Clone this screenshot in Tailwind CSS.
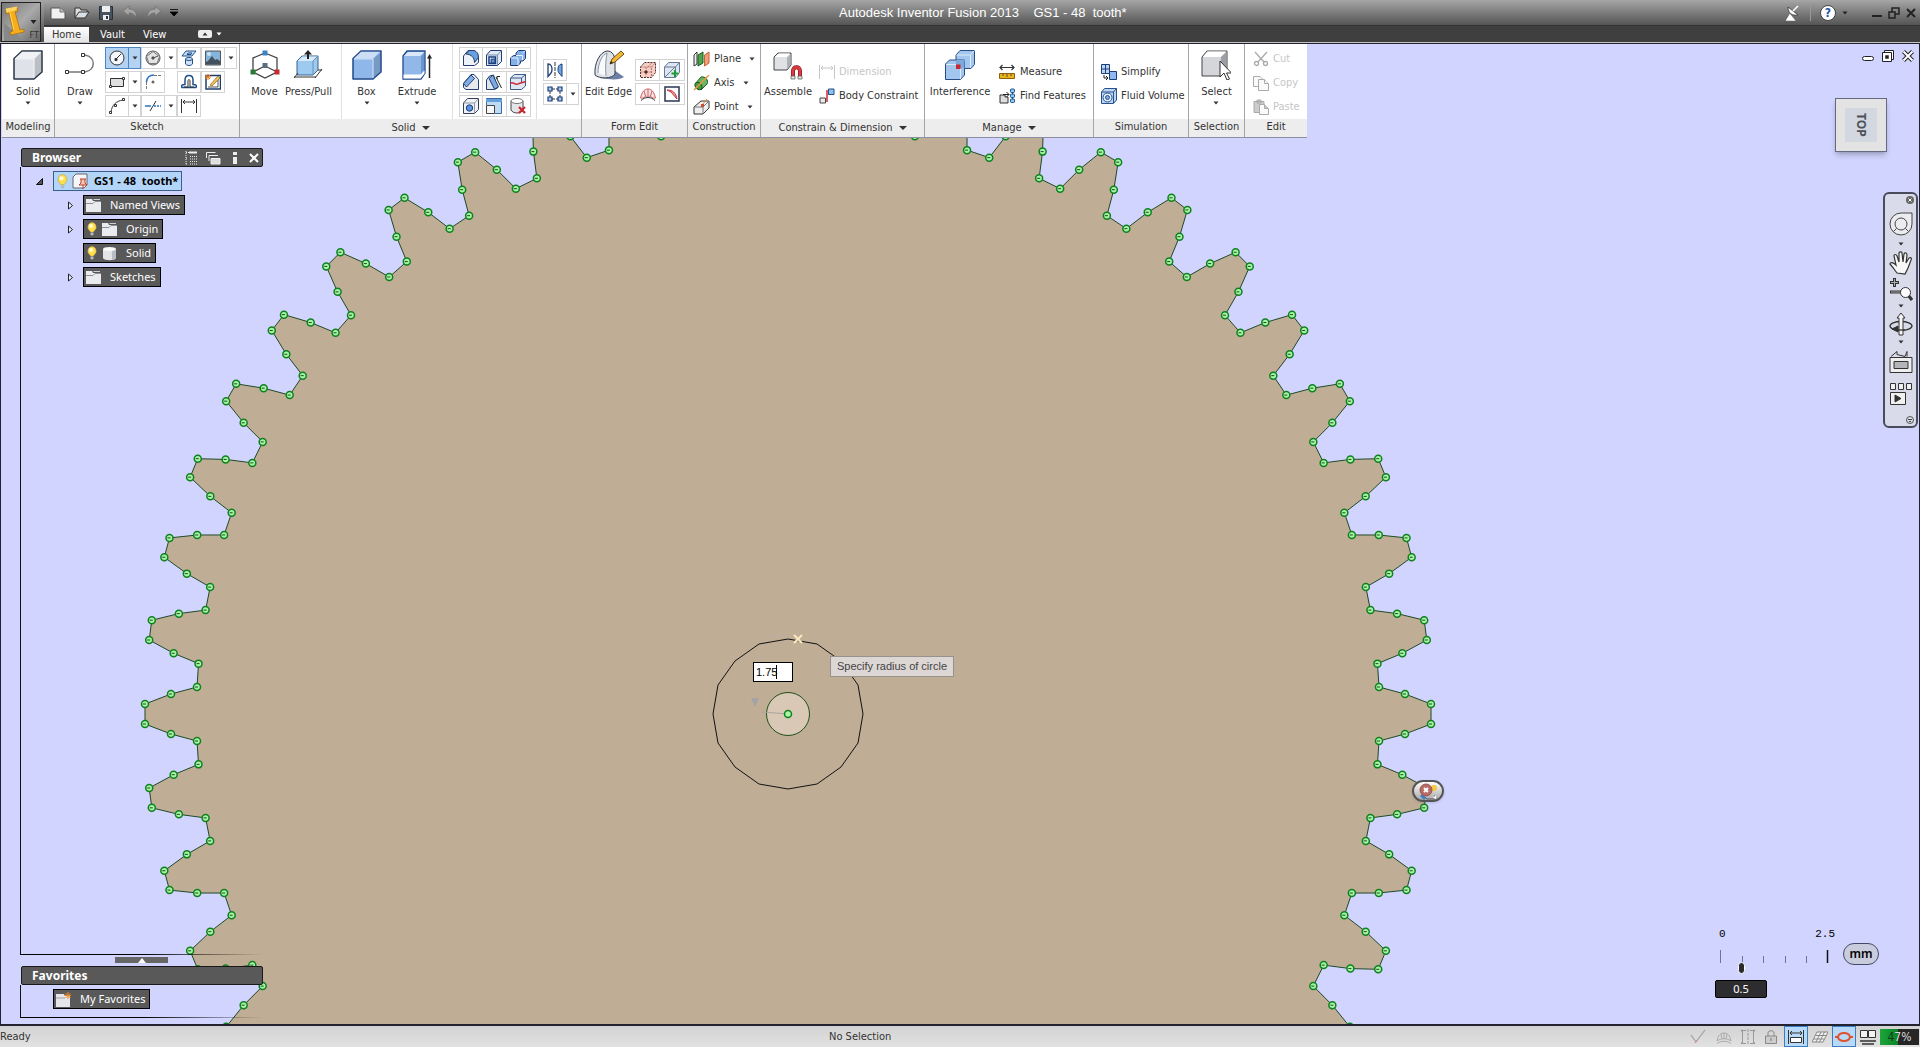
<!DOCTYPE html>
<html lang="en">
<head>
  <meta charset="UTF-8">
  <meta name="viewport" content="width=device-width, initial-scale=1.0">
  <title>Autodesk Inventor Fusion 2013</title>
  <script src="https://cdn.jsdelivr.net/npm/@tailwindcss/browser@4"></script>
</head>
<body class="h-screen flex flex-col overflow-hidden bg-[#3f3f3f] font-['DejaVu_Sans_Condensed','Noto_Sans',sans-serif] text-[11px] leading-4 text-[#333]">

  <!-- Shared symbols -->
  <svg class="hidden">
    <symbol id="caret" viewBox="0 0 6 4"><path d="M0.5 0.5h5L3 3.5z" fill="currentColor"/></symbol>
    <symbol id="cube" viewBox="0 0 30 30">
      <path d="M1 8.500L9 1H29V22L21 29H1z" stroke-width="1.500" stroke-linejoin="round"/>
      <path d="M1.800 8.500L9 1.800H28L21 8.500z" fill="#fff" fill-opacity=".55" stroke="none"/>
      <path d="M21.500 9L28.300 2.500V21.500L21.500 28z" fill="#000" fill-opacity=".16" stroke="none"/>
      <path d="M2 9H21V28" fill="none" stroke="#fff" stroke-opacity=".6" stroke-width="1"/>
    </symbol>
    <symbol id="folder" viewBox="0 0 15 15">
      <path d="M0 5V1h6l1 2h8v11H0z" fill="#e9ebee"/><path d="M7 1h7v1H8z" fill="#cfd1d5"/><path d="M0 5.500h7l2-2h6" fill="none" stroke="#8d9096"/>
    </symbol>
    <symbol id="bulb" viewBox="0 0 10 14">
      <path d="M5 0.500a4.500 4.500 0 0 0-2.500 8L3.500 10h3l1-1.500A4.500 4.500 0 0 0 5 .5z" fill="#ffe04c" stroke="#b8963a" stroke-width=".5"/><circle cx="4" cy="4" r="2" fill="#fffbd8"/><path d="M3.500 10.500h3v2l-1 1h-1l-1-1z" fill="#b4b8be"/>
    </symbol>
  </svg>

  <!-- Title bar and tabs -->
  <header class="flex h-[43px] shrink-0 border-b border-[#c4c4c4] text-white bg-[#3f3f3f]">
    <div class="w-11 shrink-0 bg-linear-to-b from-[#a6a6a6] to-[#4a4a4a]">
      <button class="relative block w-10 h-10 ml-px mt-[2px] border border-[#222] bg-linear-to-br from-[#777] via-[#aaa] to-[#666]" aria-label="Application menu">
        <svg class="w-[38px] h-[38px]" viewBox="0 0 38 38">
          <path d="M2 20L16 32 22 38H2z" fill="#888"/>
          <path d="M4 6L15 4 16 8 13 9 18 27 22 26 22 29 9 32 8 29 11 28 7 10 4 11z" fill="#f6ae1d" stroke="#a76a05" stroke-width=".7"/>
          <path d="M4 6L15 4 13 7 5 9zM8 10l4 17" fill="#ffd665" stroke="#ffd665"/>
          <path d="M28.500 17h6l-3 4z" fill="#222"/>
        </svg>
        <span class="absolute right-px bottom-0 text-[9px] leading-3 text-[#333]">FT</span>
      </button>
    </div>
    <div class="flex-1 flex flex-col">
      <div class="relative h-[26px] flex items-center bg-linear-to-b from-[#a6a6a6] to-[#555] border-b border-[#333]">
        <div class="flex items-center gap-2 pl-[6px]">
          <button aria-label="New"><svg class="w-4 h-4" viewBox="0 0 16 16"><path d="M1 3h9l5 4v7H1z" fill="#f1f1f1" stroke="#555"/><path d="M10 3v4h5" fill="#bbb" stroke="#777"/></svg></button>
          <button aria-label="Open"><svg class="w-4 h-4" viewBox="0 0 16 16"><path d="M1 13V3h5l1 2h6v3" fill="#ddd" stroke="#333"/><path d="M1 13L5 7h10l-4 6z" fill="#d8e0e6" stroke="#333"/></svg></button>
          <button aria-label="Save"><svg class="w-4 h-4" viewBox="0 0 16 16"><path d="M1.500 1.500h13v13h-13z" fill="#47525f" stroke="#27303a"/><path d="M4 1h8v6H4zM5 10h6v5H5z" fill="#eee"/><path d="M8 11h2v3H8z" fill="#334"/></svg></button>
          <button aria-label="Undo"><svg class="w-4 h-4" viewBox="0 0 16 16"><path d="M1 6l6-5v3c5 0 8 3 7 9-1-3-3-5-7-5v3z" fill="#a4a4a4" stroke="#666" stroke-width=".6"/></svg></button>
          <button aria-label="Redo"><svg class="w-4 h-4" viewBox="0 0 16 16"><path d="M15 6L9 1v3C4 4 1 7 2 13c1-3 3-5 7-5v3z" fill="#a4a4a4" stroke="#666" stroke-width=".6"/></svg></button>
          <button aria-label="Customize" class="text-black"><svg class="w-2 h-2" viewBox="0 0 8 8"><path d="M0 0.500h8M0 3h8L4 7z" stroke="currentColor" fill="currentColor" stroke-width=".8"/></svg></button>
        </div>
        <h1 class="absolute left-[795px] font-['Liberation_Sans',sans-serif] text-[13px] whitespace-pre">Autodesk Inventor Fusion 2013    GS1 - 48  tooth*</h1>
        <div class="ml-auto flex items-center pr-1 text-[#222]">
          <button aria-label="Communication Center"><svg class="w-4 h-4" viewBox="0 0 16 16"><path d="M3 2c0 6 4 9 10 8z" fill="#fff" stroke="#222" stroke-width=".7"/><path d="M8 6l5-5M2 15l3-5 4 5z" fill="#fff" stroke="#fff" stroke-width="1.500"/></svg></button>
          <span class="w-px h-4 bg-[#999] mx-[9px]"></span>
          <button aria-label="Help" class="w-4 h-4 rounded-full bg-white border border-[#444] text-[12px] leading-[14px] font-bold text-[#2456a8]">?</button>
          <svg class="w-[6px] h-1 ml-[6px]"><use href="#caret"/></svg>
          <button aria-label="Minimize" class="ml-6"><svg class="w-[10px] h-3" viewBox="0 0 10 12"><path d="M0 9h10" stroke="currentColor" stroke-width="2"/></svg></button>
          <button aria-label="Restore" class="ml-[6px]"><svg class="w-3 h-3" viewBox="0 0 12 12" fill="none" stroke="currentColor" stroke-width="1.500"><path d="M1 5h6v6H1zM4 5V1h7v6H7"/></svg></button>
          <button aria-label="Close" class="ml-[6px]"><svg class="w-[10px] h-3" viewBox="0 0 10 12"><path d="M1 2l8 8M9 2L1 10" stroke="currentColor" stroke-width="2"/></svg></button>
        </div>
      </div>
      <nav class="flex items-end h-4 text-[11px] leading-[15px]">
        <a href="#" class="w-[45px] text-center bg-linear-to-b from-white to-[#e4e4e4] text-[#333]">Home</a>
        <a href="#" class="ml-[11px]">Vault</a>
        <a href="#" class="ml-[18px]">View</a>
        <button aria-label="Ribbon display" class="ml-[32px] mb-1 flex items-center gap-1">
          <svg class="w-[14px] h-2" viewBox="0 0 14 8"><rect width="14" height="8" rx="2" fill="#eee"/><path d="M4.500 5.500h5L7 2.500z" fill="#333"/></svg>
          <svg class="w-[6px] h-1"><use href="#caret"/></svg>
        </button>
      </nav>
    </div>
  </header>

  <main class="relative flex-1 min-h-0 flex flex-col items-start bg-[#d0d4fe] border-l border-r border-t border-b-2 border-[#22232e] overflow-hidden">

    <!-- Model canvas -->
    <svg class="absolute inset-0 w-full h-full" id="canvas">
      <g transform="translate(787 670)">
        <polygon id="gear" fill="#bfae95" stroke="#1e4a24"/>
        <g id="points" fill="#a4f5a4" stroke="#10801f" stroke-width="1.500"></g>
        <path d="M-30-20Q-34-60-20-78L0-78" stroke="#b4b4be" fill="none" stroke-opacity=".35"/>
        <path d="M-37-16h8l-4 9z" fill="#a5a3a6"/>
        <polygon points="0,-75 29,-70 53,-53 70,-29 75,0 70,29 53,53 29,70 0,75 -29,70 -53,53 -70,29 -75,0 -70,-29 -53,-53 -29,-70" fill="none" stroke="#111"/>
        <circle r="21.500" fill="#d9c8b5" stroke="#1f4f1a"/>
        <path d="M-26-2L0 0" stroke="#a8a69f"/>
        <circle r="3.500" fill="#a4f5a4" stroke="#10801f" stroke-width="1.500"/>
        <path d="M6-79l8 8M14-79l-8 8" stroke="#fbe7c0" stroke-width="2"/>
      </g>
    </svg>
    <input id="radius" type="text" value="1.75" aria-label="Radius" class="absolute left-[752px] top-[618px] w-10 h-5 px-[2px] border border-black bg-white text-black font-['Liberation_Sans',sans-serif] text-[11px]">
    <span class="absolute left-[775px] top-[621px] w-px h-[14px] bg-black"></span>
    <div class="absolute left-[829px] top-[612px] h-[21px] px-[6px] border border-[#98928c] bg-[#dcd6d4] text-[#444] font-['Liberation_Sans',sans-serif] text-[11px] leading-[18px] whitespace-nowrap">Specify radius of circle</div>
    <button aria-label="Cancel" class="absolute left-[1411px] top-[736px] w-8 h-[22px] rounded-full border-2 border-[#555] bg-linear-to-b from-white to-[#aaa] shadow flex justify-center">
      <svg class="w-5 h-5" viewBox="0 0 20 20"><circle cx="16" cy="6" r="3" fill="#f8c93e"/><path d="M4 13l5 4h8v-4" fill="none" stroke="#556"/><path d="M3 13l4 4" stroke="#3f7fc4" stroke-width="3"/><path d="M15 16l3-3v4z" fill="#fff"/><circle cx="8" cy="8" r="6" fill="#b86b66" stroke="#9a5450"/><path d="M6 6l4 4M10 6l-4 4" stroke="#fff" stroke-width="2"/></svg>
    </button>

    <!-- Ribbon -->
    <div class="relative flex h-[94px] shrink-0 ml-px border-b border-[#8d8fa5] bg-white text-[#333]" role="toolbar">
      <section class="w-[53px] flex flex-col border-r border-[#a5a5a5]">
        <div class="flex-1 flex justify-center">
          <button class="flex flex-col items-center pt-[6px]"><svg class="w-[30px] h-[30px]" fill="#dfe3e9" stroke="#2b3548"><use href="#cube"/></svg><span class="mt-1">Solid</span><svg class="w-[6px] h-1 mt-[1px]"><use href="#caret"/></svg></button>
        </div>
        <h2 class="h-[18px] bg-[#ededed] text-center">Modeling</h2>
      </section>

      <section class="w-[185px] flex flex-col border-r border-[#a5a5a5]">
        <div class="flex-1 flex">
          <button class="w-[50px] flex flex-col items-center pt-[6px]"><svg class="w-[30px] h-[30px]" viewBox="0 0 30 30" fill="none" stroke="#333"><path d="M2 22h17M19 5h1c11 2 11 15 0 17h-1" stroke="#777" stroke-width="1.500"/><path d="M0.500 20.500h3v3h-3zM16.500 20.500h3v3h-3zM16.500 3.500h3v3h-3z" fill="#fff"/></svg><span class="mt-1">Draw</span><svg class="w-[6px] h-1 mt-[1px]"><use href="#caret"/></svg></button>
          <div class="grid grid-cols-[36px_36px_24px_36px] auto-rows-[22px] gap-y-[2px] pt-[3px] content-start">
            <div class="flex border border-[#4c86c2] bg-[#b4d3f3]">
              <button class="w-[23px] flex items-center justify-center border-r border-[#4c86c2]" aria-label="Circle"><svg class="w-4 h-4" viewBox="0 0 16 16" stroke="#333"><circle cx="8" cy="8" r="7" fill="#f4f8fc"/><path d="M7 9l5-5"/><path d="M6 8.500h2v2H6z" fill="#333"/></svg></button>
              <button class="flex-1 flex items-center justify-center" aria-label="Circle options"><svg class="w-[6px] h-1"><use href="#caret"/></svg></button>
            </div>
            <div class="flex border border-[#d3d3d3]">
              <button class="w-[23px] flex items-center justify-center border-r border-[#d3d3d3]" aria-label="Polygon"><svg class="w-4 h-4" viewBox="0 0 16 16" fill="#e4e4e4" stroke="#555"><circle cx="8" cy="8" r="7"/><path d="M8 1.500l6.500 5-2.500 7H4L1.500 6.500z" stroke="#777"/><path d="M8 8l5-2"/><path d="M7 7h2v2H7z" fill="#444"/></svg></button>
              <button class="flex-1 flex items-center justify-center" aria-label="Polygon options"><svg class="w-[6px] h-1"><use href="#caret"/></svg></button>
            </div>
            <button class="flex items-center justify-center border border-[#d3d3d3]" aria-label="Project"><svg class="w-4 h-4" viewBox="0 0 16 16" fill="#cfe2f7" stroke="#1d4f88"><path d="M5 1h10l-4 5H1zM7 3h4l-1 1.500H6z"/><path d="M4.500 9v5c2 2 5 2 7 0V9"/><ellipse cx="8" cy="9" rx="3.500" ry="1.500"/></svg></button>
            <div class="flex border border-[#d3d3d3]">
              <button class="w-[23px] flex items-center justify-center border-r border-[#d3d3d3]" aria-label="Image"><svg class="w-4 h-4" viewBox="0 0 16 16"><path d="M.5 1h15v14H.5z" fill="#84b4dc" stroke="#555"/><path d="M1 12l2-1 4-5 3 4 2-1 3 2v3.500H1z" fill="#44505c"/><circle cx="4" cy="4" r="2" fill="#c8e2f5"/></svg></button>
              <button class="flex-1 flex items-center justify-center" aria-label="Image options"><svg class="w-[6px] h-1"><use href="#caret"/></svg></button>
            </div>
            <div class="flex border border-[#d3d3d3]">
              <button class="w-[23px] flex items-center justify-center border-r border-[#d3d3d3]" aria-label="Rectangle"><svg class="w-4 h-4" viewBox="0 0 16 16" stroke="#333"><path d="M1.500 4.500h13v8h-13z" fill="#e0e0e0"/><path d="M.5 11.500h2v2h-2zM13.500 3.500h2v2h-2z" fill="#fff"/></svg></button>
              <button class="flex-1 flex items-center justify-center" aria-label="Rectangle options"><svg class="w-[6px] h-1"><use href="#caret"/></svg></button>
            </div>
            <button class="w-6 flex items-center justify-center border border-[#d3d3d3]" aria-label="Fillet"><svg class="w-4 h-4" viewBox="0 0 16 16" fill="none"><path d="M1.500 8C2 3 4 1 9 1" stroke="#2b74c4" stroke-width="1.500"/><path d="M1.500 8v8M9 1.500h7" stroke="#777" stroke-dasharray="3 1"/><path d="M8 6.500v3M6.500 8h3" stroke="#333"/></svg></button>
            <button class="flex items-center justify-center border border-[#d3d3d3]" aria-label="Offset"><svg class="w-4 h-4" viewBox="0 0 16 16" fill="none"><path d="M1 13.500c-1-2 0-3 3-3V6c0-6 8-6 8 0v4.500c3 0 4 1 3 3z" stroke="#1d4f88" stroke-width="1.500"/><path d="M3 13h4V7c0-2 2-2 2 0v6h4" stroke="#333"/></svg></button>
            <button class="w-6 flex items-center justify-center border border-[#d3d3d3]" aria-label="Edit sketch"><svg class="w-4 h-4" viewBox="0 0 16 16"><path d="M1 1.500h14.500V15H1z" fill="#fff" stroke="#1f3d70" stroke-width="1.500"/><path d="M3 13h10V6" stroke="#555" fill="none"/><path d="M5 11l8-9 2 2-8 8z" fill="#f2c25c" stroke="#85601c" stroke-width=".7"/><path d="M3 0v6M0 3h6M1 1l4 4M5 1L1 5" stroke="#ee7a18"/></svg></button>
            <div class="flex border border-[#d3d3d3]">
              <button class="w-[23px] flex items-center justify-center border-r border-[#d3d3d3]" aria-label="Arc"><svg class="w-4 h-4" viewBox="0 0 16 16" fill="none" stroke="#333"><path d="M2 14C3 7 7 3 14 2" /><path d="M.5 13.500h2v2h-2zM5.500 6.500h2v2h-2zM13.500 .5h2v2h-2z" fill="#fff"/></svg></button>
              <button class="flex-1 flex items-center justify-center" aria-label="Arc options"><svg class="w-[6px] h-1"><use href="#caret"/></svg></button>
            </div>
            <div class="flex border border-[#d3d3d3]">
              <button class="w-[23px] flex items-center justify-center border-r border-[#d3d3d3]" aria-label="Trim"><svg class="w-4 h-4" viewBox="0 0 16 16" fill="none"><path d="M0 8h6" stroke="#2b74c4" stroke-width="1.500"/><path d="M9 8h7" stroke="#2b74c4" stroke-dasharray="2 1" stroke-width="1.500"/><path d="M5 13L11 3" stroke="#333"/></svg></button>
              <button class="flex-1 flex items-center justify-center" aria-label="Trim options"><svg class="w-[6px] h-1"><use href="#caret"/></svg></button>
            </div>
            <button class="flex items-center justify-center border border-[#d3d3d3]" aria-label="Dimension"><svg class="w-4 h-4" viewBox="0 0 16 16" fill="none" stroke="#333"><path d="M.5 1v14M15.500 1v14"/><path d="M2 4h12M4 2L2 4l2 2M12 2l2 2-2 2" /></svg></button>
          </div>
        </div>
        <h2 class="h-[18px] bg-[#ededed] text-center">Sketch</h2>
      </section>

      <section class="w-[342px] flex flex-col border-r border-[#a5a5a5]">
        <div class="flex-1 flex">
          <div class="w-[102px] flex border-r border-[#e0e0e0]">
            <button class="w-[49px] flex flex-col items-center pt-[6px]"><svg class="w-[30px] h-[30px]" viewBox="0 0 30 30" fill="none"><path d="M15 3l12 5v14L15 28 3 22V8zM15 16L27 22M15 16L3 22" stroke="#444" stroke-width="1.300"/><path d="M12.500 .5h5v5h-5z" fill="#3b82c8"/><path d="M12.500 13h5v5h-5z" fill="#596d80"/><path d="M.5 19.500h5v5h-5z" fill="#2a7a34"/><path d="M24.500 19.500h5v5h-5z" fill="#c32c35"/></svg><span class="mt-1">Move</span></button>
            <button class="flex flex-col items-center pt-[6px]"><svg class="w-[30px] h-[30px]" viewBox="0 0 30 30"><g fill="#9ecaf0" stroke="#35638f"><path d="M4 11l5-5h16v14l-5 5H4z"/><path d="M4.500 11l5-4.500H24l-4.500 4.500z" fill="#d8ebfa" stroke="none"/><path d="M20 11v14M20 11l5-5" stroke="#6792bc"/></g><path d="M15 9V2" stroke="#222" stroke-width="2"/><path d="M11 4.500L15 0l4 4.500z" fill="#222"/><path d="M1 28l4-5M22 28l7-9M1 27h22M25 20h4" stroke="#333" fill="none"/></svg><span class="mt-1 -mx-1">Press/Pull</span></button>
          </div>
          <div class="w-[111px] flex border-r border-[#e0e0e0]">
            <button class="w-[49px] flex flex-col items-center pt-[6px]"><svg class="w-[30px] h-[30px]" fill="#8fb7ea" stroke="#214a8c"><use href="#cube"/></svg><span class="mt-1">Box</span><svg class="w-[6px] h-1 mt-[1px]"><use href="#caret"/></svg></button>
            <button class="w-[52px] flex flex-col items-center pt-[6px]"><svg class="w-[30px] h-[30px]" viewBox="0 0 30 30"><path d="M1 6l4-5h18v22l-4 6H1z" fill="#91b8e8" stroke="#214a8c" stroke-width="1.300"/><path d="M2 6l4-4h16l-4 4z" fill="#d9e8fa"/><path d="M1.500 24.500h17l4-4v3l-4 5h-17z" fill="#fff"/><path d="M19 7l3-4v17l-3 4z" fill="#6b95d0"/><path d="M27.500 28V7" stroke="#222" stroke-width="1.500"/><path d="M25 8.500l2.500-4.500L30 8.500z" fill="#222"/></svg><span class="mt-1">Extrude</span><svg class="w-[6px] h-1 mt-[1px]"><use href="#caret"/></svg></button>
          </div>
          <div class="w-[84px] border-r border-[#e0e0e0] flex justify-center">
            <div class="grid grid-cols-[24px_24px_24px] auto-rows-[22px] gap-y-[2px] pt-[3px] content-start">
              <button class="flex items-center justify-center border border-[#d3d3d3]" aria-label="Fillet"><svg class="w-4 h-4" viewBox="0 0 16 16" stroke="#223f70"><path d="M.5 15.500V6L5 .5h6l4.500 6v6l-4 3z" fill="#eef2f7"/><path d="M3 4l3-3.500h5c3 1 4.500 3 4.500 7l-4 5c0-5-3-8-8.500-8.500z" fill="#699fdc"/></svg></button>
              <button class="flex items-center justify-center border border-l-0 border-[#d3d3d3]" aria-label="Shell"><svg class="w-4 h-4" viewBox="0 0 16 16" stroke="#1d3c78"><path d="M.5 5l4-4.500h11v11l-4 4H.5z" fill="#dfe8f4"/><path d="M.5 5h11v10.500M11.500 5l4-4.500" fill="none" stroke="#7890b0"/><path d="M3 7h6.500v6.500H3z" fill="#fff" stroke-width="1.500"/><path d="M5 9h4v4H5z" fill="#5a93d8"/></svg></button>
              <button class="flex items-center justify-center border border-l-0 border-[#d3d3d3]" aria-label="Combine"><svg class="w-4 h-4" viewBox="0 0 16 16" fill="#83b0e6" stroke="#1d3c78"><path d="M.5 8l3-2.500H6V3L8.500.5h7v8L13 11h-2.500v2L8 15.500H.5z"/><path d="M6 5.500h6.500V10M1 8h7v7M12.500 3l3-2.500" fill="none" stroke="#e8f1fb"/></svg></button>
              <button class="flex items-center justify-center border border-[#d3d3d3]" aria-label="Chamfer"><svg class="w-4 h-4" viewBox="0 0 16 16" stroke="#223f70"><path d="M.5 9.500L8 .5h3l4.500 5v10H3l-2.500-2z" fill="#e6e9ee"/><path d="M.5 9.500L8 1l3.500 3.500-8 8.500z" fill="#80aee4"/></svg></button>
              <button class="flex items-center justify-center border border-l-0 border-[#d3d3d3]" aria-label="Draft"><svg class="w-4 h-4" viewBox="0 0 16 16" stroke="#223f70"><path d="M.5 6l3-4 4-1 4 13-3 1.500H.5z" fill="#dde5ef"/><path d="M3 4.500L7 1l5.500 12-4 2z" fill="#7daae2"/><path d="M10 3l5.500 11M11 5V2.500h3" stroke="#222" fill="none"/></svg></button>
              <button class="flex items-center justify-center border border-l-0 border-[#d3d3d3]" aria-label="Split"><svg class="w-4 h-4" viewBox="0 0 16 16"><path d="M.5 4l4-3.500h11V12l-4 3.500H.5z" fill="#dde6f1" stroke="#3a5a8c"/><path d="M.5 4h11v4M11.500 4l4-3.500" stroke="#3a5a8c" fill="none"/><path d="M0 9.500c3-3 5 3 9 0l7-2" stroke="#cf2a33" fill="none" stroke-width="1.500"/></svg></button>
              <button class="flex items-center justify-center border border-[#d3d3d3]" aria-label="Hole"><svg class="w-4 h-4" viewBox="0 0 16 16" stroke="#333f55"><path d="M.5 5l4-4.500h11v11l-4 4H.5z" fill="#f0f2f5"/><path d="M.5 5h11v10.500M11.500 5l4-4.500" fill="none" stroke="#8d97a8"/><circle cx="6.500" cy="10" r="3.200" fill="#5d95dc" stroke="#1d3c78"/></svg></button>
              <button class="flex items-center justify-center border border-l-0 border-[#d3d3d3]" aria-label="Scale"><svg class="w-4 h-4" viewBox="0 0 16 16"><path d="M.5 .5h15v15H.5z" fill="#bfdaf3"/><path d="M.5 7V.5h15v15H9" fill="none" stroke="#3a6ca8"/><path d="M0 1h16v3H0z" fill="#67a0d8"/><path d="M.5 7.500h8v8h-8z" fill="#f7f7f7" stroke="#444"/></svg></button>
              <button class="flex items-center justify-center border border-l-0 border-[#d3d3d3]" aria-label="Delete"><svg class="w-4 h-4" viewBox="0 0 16 16"><path d="M1 3v9c2 4 10 4 12 0V3" fill="#e3e5e8" stroke="#444"/><ellipse cx="7" cy="3" rx="6" ry="2.500" fill="#fff" stroke="#777"/><path d="M9 9l6 6M15 9l-6 6" stroke="#c92430" stroke-width="2.200"/></svg></button>
            </div>
          </div>
          <div class="flex-1 flex flex-col gap-[2px] pl-[6px] pt-[15px]">
            <button class="w-6 h-[22px] flex items-center justify-center border border-[#d3d3d3]" aria-label="Mirror"><svg class="w-4 h-4" viewBox="0 0 16 16"><path d="M1 14.500V2c3 0 4 3 4 5s0 3-1 4z" fill="#fff" stroke="#1d3c78" stroke-width="1.300"/><path d="M15 14.500V2c-3 0-4 3-4 5s0 3 1 4z" fill="#6ea6e2" stroke="#1d3c78"/><path d="M8 0v16" stroke="#333" stroke-dasharray="4 1"/></svg></button>
            <div class="w-9 h-[22px] flex border border-[#d3d3d3]">
              <button class="w-[23px] flex items-center justify-center border-r border-[#d3d3d3]" aria-label="Pattern"><svg class="w-4 h-4" viewBox="0 0 16 16"><path d="M3 5v6M5 3h6M13 5v6M5 13h6" stroke="#333" stroke-dasharray="3 1"/><path d="M1 1h4v4H1zM11 1h4v4h-4zM1 11h4v4H1zM11 11h4v4h-4z" fill="#a5caf0" stroke="#1d3c78" stroke-width="1.200"/></svg></button>
              <button class="flex-1 flex items-center justify-center" aria-label="Pattern options"><svg class="w-[6px] h-1"><use href="#caret"/></svg></button>
            </div>
          </div>
        </div>
        <h2 class="h-[18px] bg-[#ededed] flex justify-center items-center gap-[6px]">Solid <svg class="w-2 h-[6px]" viewBox="0 0 8 6"><path d="M0 1h8L4 5z" fill="#333"/></svg></h2>
      </section>

      <section class="w-[106px] flex flex-col border-r border-[#a5a5a5]">
        <div class="flex-1 flex">
          <button class="w-[53px] flex flex-col items-center pt-[6px]"><svg class="w-[30px] h-[30px]" viewBox="0 0 30 30"><path d="M6 28c12 2 20 2 24-1l-10-7z" fill="#6d7fa5"/><path d="M1 25C0 13 6 2 13 1c6 0 8 5 8 12v11c-3 5-16 5-20 1z" fill="#dfe3e8" stroke="#333c4a"/><path d="M4 23C4 13 8 5 13 3c-1 6-2 14-1 23" fill="#f8fafc" stroke="#8d97a6"/><path d="M16 14l2-5 9-8 3 3-9 8z" fill="#f2b938" stroke="#704d13"/><path d="M16 14l1-3 2 2z" fill="#222"/></svg><span class="mt-1 whitespace-nowrap">Edit Edge</span></button>
          <div class="grid grid-cols-[25px_25px] auto-rows-[22px] gap-y-[2px] pt-[15px] content-start">
            <button class="flex items-center justify-center border border-[#d3d3d3]" aria-label="Form box"><svg class="w-4 h-4" viewBox="0 0 16 16" fill="none" stroke="#4a2c2c"><path d="M.5 5l4-4.500h11v10l-4 5H.5z" fill="#f6cfc4" stroke-dasharray="2 1"/><path d="M.5 5h11v10M11.500 5l4-4.500M6 5v10M.5 10h11M8 5l4-4.500" stroke="#b8746c" stroke-dasharray="2 1"/><path d="M5 9h2v2H5z" fill="#a11"/></svg></button>
            <button class="flex items-center justify-center border border-l-0 border-[#d3d3d3]" aria-label="Form convert"><svg class="w-4 h-4" viewBox="0 0 16 16"><path d="M.5 5l4-4.500h11v10l-4 5H.5z" fill="#dbe6f2" stroke="#687b95"/><path d="M.5 5h11v10M11.500 5l4-4.500M1 15L11 5" stroke="#687b95" fill="none"/><path d="M11 8v7M7.500 11.500h7" stroke="#1f9a37" stroke-width="2"/></svg></button>
            <button class="flex items-center justify-center border border-[#d3d3d3]" aria-label="Curvature"><svg class="w-4 h-4" viewBox="0 0 16 16" fill="#f8e0df" stroke="#c96468"><path d="M.5 12C2 6 4 3 8 3s6 3 7.500 9h-3C11 9.500 5 9.500 3.500 12z"/><path d="M5.500 10L4 5M8 9.500V3M10.500 10L12 5"/><path d="M1 14.500c4-4 10-4 14 0" fill="none" stroke="#333"/></svg></button>
            <button class="flex items-center justify-center border border-l-0 border-[#d3d3d3]" aria-label="Zebra"><svg class="w-4 h-4" viewBox="0 0 16 16"><path d="M1 1h14v14H1z" fill="#fff" stroke="#2a3550" stroke-width="1.500"/><path d="M3 4c6 0 9 3 10 9L7 6z" fill="#e99ca0" stroke="#c9343e"/></svg></button>
          </div>
        </div>
        <h2 class="h-[18px] bg-[#ededed] text-center">Form Edit</h2>
      </section>

      <section class="w-[73px] flex flex-col border-r border-[#a5a5a5]">
        <div class="flex-1 flex flex-col items-start pl-[5px] pt-[3px]">
          <button class="flex items-center gap-1 h-6"><svg class="w-[17px] h-4" viewBox="0 0 17 16"><path d="M1 4l3-3v12l-3 2z" fill="#eee" stroke="#333"/><path d="M5 4l5-3v11l-5 3z" fill="#4fa64a" stroke="#1c5a20"/><path d="M11.500 4l4.500-3v11l-4.500 3z" fill="#f0a07a" stroke="#c06338"/></svg>Plane<svg class="w-[6px] h-1 ml-1"><use href="#caret"/></svg></button>
          <button class="flex items-center gap-1 h-6"><svg class="w-[17px] h-4" viewBox="0 0 17 16"><path d="M2 9l6-7c4-1 8 3 6 7l-6 6z" fill="#6cb564" stroke="#1c5a20"/><ellipse cx="5.500" cy="11" rx="3" ry="4" transform="rotate(-40 5.500 11)" fill="#4d9a45" stroke="#1c5a20"/><path d="M1 15L16 0" stroke="#e59a3c" stroke-width="1.500"/></svg>Axis<svg class="w-[6px] h-1 ml-1"><use href="#caret"/></svg></button>
          <button class="flex items-center gap-1 h-6"><svg class="w-[17px] h-4" viewBox="0 0 17 16"><path d="M1 8l7-6h8v7l-6 6H1z" fill="#efefef" stroke="#333"/><path d="M1 8h9v7M10 8l6-6" fill="none" stroke="#777"/><path d="M8 5h3v3H8z" fill="#c9502e"/><path d="M10 5l4-5" stroke="#d8903f"/></svg>Point<svg class="w-[6px] h-1 ml-1"><use href="#caret"/></svg></button>
        </div>
        <h2 class="h-[18px] bg-[#ededed] text-center">Construction</h2>
      </section>

      <section class="w-[164px] flex flex-col border-r border-[#a5a5a5]">
        <div class="flex-1 flex">
          <button class="w-[54px] flex flex-col items-center pt-[6px]"><svg class="w-[30px] h-[30px]" viewBox="0 0 30 30"><path d="M1 7l4-4h13v12l-4 5H1z" fill="#dfe1e5" stroke="#444"/><path d="M2 7l4-3.500h11L14 7z" fill="#fff"/><path d="M14 7.500V19l3.500-4.500V4z" fill="#aeb2b8"/><path d="M20 27v-6c0-5 7-5 7 0v6" fill="none" stroke="#7e1c22" stroke-width="4"/><path d="M20 27v-6c0-5 7-5 7 0v6" fill="none" stroke="#de3a40" stroke-width="2.500"/><path d="M18 26h4v3h-4zM25 26h4v3h-4z" fill="#e4e4e4" stroke="#555" stroke-width=".7"/></svg><span class="mt-1">Assemble</span></button>
          <div class="flex flex-col items-start pl-1 pt-4">
            <button disabled class="flex items-center gap-1 h-6 text-[#c6c6c6]"><svg class="w-4 h-4" viewBox="0 0 16 16" fill="none" stroke="currentColor"><path d="M.5 1v14M15.500 1v14M2 4h12M4 2L2 4l2 2M12 2l2 2-2 2"/></svg>Dimension</button>
            <button class="flex items-center gap-1 h-6 whitespace-nowrap"><svg class="w-4 h-4" viewBox="0 0 16 16"><path d="M1 10h5.500v5H1z" fill="#ececec" stroke="#444"/><path d="M9.500 1H15v5.500H9.500z" fill="#8fc0ef" stroke="#1d4f88"/><path d="M8 2v12" stroke="#cf2a33" stroke-width="1.500"/></svg>Body Constraint</button>
          </div>
        </div>
        <h2 class="h-[18px] bg-[#ededed] flex justify-center items-center gap-[6px]">Constrain &amp; Dimension <svg class="w-2 h-[6px]" viewBox="0 0 8 6"><path d="M0 1h8L4 5z" fill="#333"/></svg></h2>
      </section>

      <section class="w-[169px] flex flex-col border-r border-[#a5a5a5]">
        <div class="flex-1 flex">
          <button class="w-[70px] flex flex-col items-center pt-[6px]"><svg class="w-[30px] h-[30px]" viewBox="0 0 30 30" fill="#a3c6ee" stroke="#274d86"><path d="M11 5l4-4.500h14.500v14L26 18.500H11z"/><path d="M11.500 5h14V18M25.500 5l4-4.500" fill="none" stroke="#dcebfa"/><path d="M.5 14l4-4h15v15l-4 4.500H.5z"/><path d="M1 14.500h14.500V29M15.500 14l4-4" fill="none" stroke="#dcebfa"/><path d="M11 10h8.500v8.500H11z" fill="#7fa9dc" stroke="none"/><path d="M11 14.500h4.500V19H11z" fill="#cb2732" stroke="none"/></svg><span class="mt-1">Interference</span></button>
          <div class="flex flex-col items-start pl-1 pt-4">
            <button class="flex items-center gap-[5px] h-6"><svg class="w-4 h-4" viewBox="0 0 16 16"><path d="M1 3.500h14M3.500 1L1 3.500 3.500 6M12.500 1L15 3.500 12.500 6" stroke="#333" fill="none" stroke-width="1.200"/><path d="M.5 9.500h15v5H.5z" fill="#e8b51e" stroke="#8a6208"/><path d="M4 10v2M8 10v3M12 10v2" stroke="#644"/></svg>Measure</button>
            <button class="flex items-center gap-[5px] h-6 whitespace-nowrap"><svg class="w-4 h-4" viewBox="0 0 16 16"><path d="M1 7h5v2h3v6H1z" fill="#ddd" stroke="#333"/><path d="M4 6.500h6M7.500 4L10 6.500 7.500 9" stroke="#222" fill="none"/><path d="M13.500 1v14" stroke="#1d4f88"/><rect x="11.500" y="1" width="4" height="3.500" rx="1" fill="#8fc8f2" stroke="#1d4f88"/><rect x="11.500" y="6" width="4" height="3.500" rx="1" fill="#8fc8f2" stroke="#1d4f88"/><rect x="11.500" y="11" width="4" height="3.500" rx="1" fill="#8fc8f2" stroke="#1d4f88"/></svg>Find Features</button>
          </div>
        </div>
        <h2 class="h-[18px] bg-[#ededed] flex justify-center items-center gap-[6px]">Manage <svg class="w-2 h-[6px]" viewBox="0 0 8 6"><path d="M0 1h8L4 5z" fill="#333"/></svg></h2>
      </section>

      <section class="w-[95px] flex flex-col border-r border-[#a5a5a5]">
        <div class="flex-1 flex flex-col items-start pl-[7px] pt-4">
          <button class="flex items-center gap-1 h-6"><svg class="w-4 h-4" viewBox="0 0 16 16"><path d="M.5 .5h8v9h-8z" fill="#b9d7f4" stroke="#1d3c78"/><path d="M4.500 1v8M1 5h7" stroke="#1d3c78"/><path d="M8.500 7.500h7v8h-7z" fill="#8cbaf0" stroke="#1d3c78"/><path d="M3 11v3h4M5 12l2 2-2 2" stroke="#222" fill="none"/></svg>Simplify</button>
          <button class="flex items-center gap-1 h-6 whitespace-nowrap"><svg class="w-4 h-4" viewBox="0 0 16 16" stroke="#27518f"><path d="M.5 4l3-3.500h12V12l-3 3.500H.5z" fill="#bcd5f2"/><path d="M.5 4h12v11M12.500 4l3-3.500" fill="none"/><circle cx="6.500" cy="9.500" r="4.500" fill="#e3effb"/><circle cx="6.500" cy="9.500" r="2" fill="#7fabe0"/></svg>Fluid Volume</button>
        </div>
        <h2 class="h-[18px] bg-[#ededed] text-center">Simulation</h2>
      </section>

      <section class="w-[56px] flex flex-col border-r border-[#a5a5a5]">
        <div class="flex-1 flex justify-center">
          <button class="flex flex-col items-center pt-[6px]"><svg class="w-[30px] h-[30px]" viewBox="0 0 30 30"><path d="M1 7l5-6h20v18l-6 7H1z" fill="#d4d6d9" stroke="#444"/><path d="M2 7l4.500-5.500H25L20 7z" fill="#fff"/><path d="M20 7v18l5.500-6V2z" fill="#9c9fa4"/><path d="M19 11v16l4-4 3 7 2.500-1-3-6h5z" fill="#fff" stroke="#333"/></svg><span class="mt-1">Select</span><svg class="w-[6px] h-1 mt-[1px]"><use href="#caret"/></svg></button>
        </div>
        <h2 class="h-[18px] bg-[#ededed] text-center">Selection</h2>
      </section>

      <section class="w-[62px] flex flex-col">
        <div class="flex-1 flex flex-col items-start pl-2 pt-[3px] text-[#c6c6c6]">
          <button disabled class="flex items-center gap-1 h-6"><svg class="w-4 h-4" viewBox="0 0 16 16" fill="none" stroke="#aaa" stroke-width="1.300"><path d="M2 1l9 10M14 1L5 11"/><circle cx="3.500" cy="12.500" r="2"/><circle cx="12.500" cy="12.500" r="2"/></svg>Cut</button>
          <button disabled class="flex items-center gap-1 h-6"><svg class="w-4 h-4" viewBox="0 0 16 16" fill="#fafafa" stroke="#aaa"><path d="M.5 1.500H7l2 2v8H.5z"/><path d="M5.500 4.500h6l4 4v7h-10z"/><path d="M11.500 4.500v4h4"/></svg>Copy</button>
          <button disabled class="flex items-center gap-1 h-6"><svg class="w-4 h-4" viewBox="0 0 16 16" fill="#ccc" stroke="#aaa"><path d="M1 2.500h10v11H1zM4 1h4v3H4z"/><path d="M6.500 5.500h5l4 4v6h-9z" fill="#fafafa"/><path d="M11.500 5.500v4h4"/></svg>Paste</button>
        </div>
        <h2 class="h-[18px] bg-[#ededed] text-center">Edit</h2>
      </section>
    </div>

    <!-- Browser and favorites -->
    <aside class="relative flex-1 min-h-0 w-[243px] ml-[19px] mt-[10px] mb-[6px] flex flex-col font-['Noto_Sans',sans-serif] text-[11px] text-white">
      <div class="h-[19px] shrink-0 ml-px flex items-center bg-[#595959] border border-[#1a1a1a] rounded-[2px] pl-[10px] pr-[3px]">
        <h2 class="font-bold text-[12px]">Browser</h2>
        <div class="ml-auto flex items-center gap-2">
          <button aria-label="Tree view"><svg class="w-[13px] h-[14px]" viewBox="0 0 13 14" stroke="#eee"><path d="M1 0v14M1 1.500h10M1 13h2M1 7h2" stroke-dasharray="1 1"/><path d="M4 1.500h8" stroke-width="2"/><path d="M5 5.500h7M5 8h7M5 10.500h7M5 13h7" stroke-dasharray="1 1"/></svg></button>
          <button aria-label="Windows"><svg class="w-[15px] h-[14px]" viewBox="0 0 15 14" fill="#595959" stroke="#eee"><path d="M.5 7V1.500h9M3 10V4.500h9"/><path d="M5 7.500h9V13H5z" fill="#ddd"/></svg></button>
          <button aria-label="Info" class="mx-1"><svg class="w-1 h-[14px]" viewBox="0 0 4 14" fill="#eee"><path d="M0 1h4v3H0zM0 6h4v7H0z"/></svg></button>
          <button aria-label="Close browser"><svg class="w-[10px] h-[10px]" viewBox="0 0 10 10" stroke="#fff" stroke-width="2"><path d="M1 1l8 8M9 1L1 9"/></svg></button>
        </div>
      </div>
      <div class="relative flex-1 min-h-0 border-l border-[#111]">
        <ul class="flex flex-col gap-1 pt-1">
          <li class="flex items-center h-5 pl-[15px] gap-[10px]">
            <svg class="w-[7px] h-[7px]" viewBox="0 0 7 7"><path d="M0.500 6.500h6v-6z" fill="#555" stroke="#111"/></svg>
            <button class="h-5 flex items-center gap-1 px-[3px] bg-[#b2d5f8] border border-[#3a5f8f] text-black font-bold whitespace-pre"><svg class="w-[11px] h-[15px]"><use href="#bulb"/></svg><svg class="w-4 h-4 mr-[2px]" viewBox="0 0 16 16"><path d="M1 4l3-3h11v11l-3 3H1z" fill="#f4f6f9" stroke="#666"/><path d="M8 6h6M9 6v4l-2 2h8l-2-2V6M11 12v4" fill="#f6c7b0" stroke="#b8402a"/></svg>GS1 - 48  tooth*</button>
          </li>
          <li class="flex items-center h-5 pl-[47px] gap-[10px]">
            <svg class="w-[5px] h-[9px]" viewBox="0 0 5 9"><path d="M.5 1v7l4-3.500z" fill="#eef" stroke="#222"/></svg>
            <button class="h-5 flex items-center gap-[9px] pl-[2px] pr-1 bg-[#595959] border border-black"><svg class="w-[15px] h-[15px]"><use href="#folder"/></svg>Named Views</button>
          </li>
          <li class="flex items-center h-5 pl-[47px] gap-[10px]">
            <svg class="w-[5px] h-[9px]" viewBox="0 0 5 9"><path d="M.5 1v7l4-3.500z" fill="#eef" stroke="#222"/></svg>
            <button class="h-5 flex items-center pl-[3px] pr-1 bg-[#595959] border border-black"><svg class="w-[10px] h-[14px]"><use href="#bulb"/></svg><svg class="w-[15px] h-[15px] ml-[5px] mr-[9px]"><use href="#folder"/></svg>Origin</button>
          </li>
          <li class="flex items-center h-5 pl-[62px]">
            <button class="h-5 flex items-center pl-[3px] pr-1 bg-[#595959] border border-black"><svg class="w-[10px] h-[14px]"><use href="#bulb"/></svg><svg class="w-[15px] h-[15px] ml-[5px] mr-[9px]" viewBox="0 0 15 15"><path d="M1 3v9c1 3 12 3 13 0V3z" fill="#e2e4e8"/><path d="M10 3h4v9c-1 1-2 2-4 2z" fill="#b9bdc4"/><ellipse cx="7.500" cy="3" rx="6.500" ry="2" fill="#fafafa"/></svg>Solid</button>
          </li>
          <li class="flex items-center h-5 pl-[47px] gap-[10px]">
            <svg class="w-[5px] h-[9px]" viewBox="0 0 5 9"><path d="M.5 1v7l4-3.500z" fill="#eef" stroke="#222"/></svg>
            <button class="h-5 flex items-center gap-[9px] pl-[2px] pr-1 bg-[#595959] border border-black"><svg class="w-[15px] h-[15px]"><use href="#folder"/></svg>Sketches</button>
          </li>
        </ul>
        <div class="absolute left-0 bottom-0 w-full h-px bg-linear-to-r from-black from-50% to-transparent"></div>
      </div>
      <button aria-label="Resize panels" class="w-[53px] h-[6px] mt-[2px] mb-[3px] shrink-0 mx-auto bg-[#666] flex justify-center items-center"><svg class="w-2 h-[5px]" viewBox="0 0 8 5"><path d="M0 5h8L4 0z" fill="#fff"/></svg></button>
      <div class="h-[19px] shrink-0 ml-px flex items-center bg-[#595959] border border-[#1a1a1a] rounded-[2px] pl-[10px]">
        <h2 class="font-bold text-[12px]">Favorites</h2>
      </div>
      <div class="relative h-[33px] shrink-0 border-l border-[#111] pl-8 pt-1">
        <button class="h-5 flex items-center gap-[9px] pl-[2px] pr-1 bg-[#595959] border border-black"><svg class="w-[15px] h-[15px]" viewBox="0 0 15 15"><path d="M0 2h8l1 2h5v11H0z" fill="#e4e6ea"/><path d="M0 6h9" stroke="#9a9da2"/><path d="M12 0v7M8.500 3.500h7M9.500 1l5 5M14.500 1l-5 5" stroke="#ee8a2a"/></svg>My Favorites</button>
        <div class="absolute left-0 bottom-0 w-full h-px bg-linear-to-r from-black from-50% to-transparent"></div>
      </div>
    </aside>

    <!-- View controls -->
    <div class="absolute right-[5px] top-[6px] flex items-center gap-2">
      <button aria-label="Minimize view"><svg class="w-3 h-3" viewBox="0 0 12 12"><rect x=".5" y="6.500" width="11" height="4" rx="2" fill="#fff" stroke="#222"/></svg></button>
      <button aria-label="Restore view"><svg class="w-3 h-3" viewBox="0 0 12 12" fill="#fff" stroke="#222"><path d="M2.500 2.500v-2h9v9h-2M.5 2.500h9v9h-9z"/><path d="M4 6h2v2H4z" fill="#111" stroke-width="1.500"/></svg></button>
      <button aria-label="Close view"><svg class="w-3 h-3" viewBox="0 0 12 12"><path d="M1.500 1.500l9 9M10.500 1.500l-9 9" stroke="#222" stroke-width="4"/><path d="M1.500 1.500l9 9M10.500 1.500l-9 9" stroke="#fff" stroke-width="2"/></svg></button>
    </div>
    <button class="absolute right-8 top-[54px] w-[52px] h-[54px] p-[9px] bg-[#e3e3e3] border border-[#666a80] shadow-md shadow-black/20" aria-label="Top view"><span class="w-full h-full flex items-center justify-center bg-[#d2d7e0] font-['Noto_Sans',sans-serif] font-bold text-[12px] text-[#4c5058] [writing-mode:vertical-rl]">TOP</span></button>
    <div class="absolute right-px top-[148px] w-[35px] h-[236px] flex flex-col items-center border-2 border-[#4a4c5c] rounded-md bg-[#d9dbea] text-[#333] pb-[2px]">
      <button aria-label="Close navigation" class="self-end mr-[2px] mt-[2px]"><svg class="w-2 h-2" viewBox="0 0 8 8"><circle cx="4" cy="4" r="4" fill="#666"/><path d="M2.500 2.500l3 3M5.500 2.500l-3 3" stroke="#fff"/></svg></button>
      <button aria-label="Steering wheel" class="mt-2"><svg class="w-6 h-6" viewBox="0 0 24 24" fill="#ececf0" stroke="#444"><path d="M12 1h11v11a11 11 0 1 1-11-11z"/><circle cx="12" cy="12" r="6"/><path d="M7.500 16.500l-3 3M16.500 16.500l3 3"/></svg></button>
      <svg class="w-[6px] h-1 mt-[6px]"><use href="#caret"/></svg>
      <button aria-label="Pan" class="mt-[5px]"><svg class="w-6 h-6" viewBox="0 0 24 24" fill="#f7f7f7" stroke="#333" stroke-width="1.200"><path d="M8 22C5 18 3 15 1 13c0-2 3-2 6 1L5 5c0-2 2-2 3 0l2 6V2c1-2 3-1 3 0l1 9 1-8c1-2 3-1 3 1l-1 8 3-5c2-1 3 0 2 2l-3 8-3 6z"/></svg></button>
      <button aria-label="Zoom" class="mt-[2px]"><svg class="w-6 h-6" viewBox="0 0 24 24"><path d="M5.500 1v9M1 5.500h9M1 15h11" stroke="#333" stroke-width="3"/><path d="M5.500 2v7M2 5.500h7M2 15h9" stroke="#aaa"/><path d="M19 18l4 5" stroke="#333" stroke-width="3"/><circle cx="16.500" cy="15.500" r="5" fill="#fff" stroke="#333"/></svg></button>
      <svg class="w-[6px] h-1 mt-[3px]"><use href="#caret"/></svg>
      <button aria-label="Orbit" class="mt-1"><svg class="w-6 h-6" viewBox="0 0 24 24" fill="none" stroke="#333"><ellipse cx="12" cy="14" rx="11" ry="4.500" stroke-width="1.300"/><path d="M10 23V6H8l4-5 4 5h-2v17z" fill="#f4f4f4"/><path d="M3 17l6-3v6z" fill="#333"/><path d="M9 18h7" stroke-width="1.300"/></svg></button>
      <svg class="w-[6px] h-1 mt-1"><use href="#caret"/></svg>
      <button aria-label="Look at" class="mt-[6px]"><svg class="w-6 h-6" viewBox="0 0 24 24" fill="#eee" stroke="#333"><path d="M1 7.500h22v15H1z"/><path d="M2 6.500l6-5v3l8 2 2-5v5" fill="none"/><path d="M5 11.500h14v7H5z" fill="#b3b5ba"/></svg></button>
      <button aria-label="ShowMotion" class="mt-2"><svg class="w-6 h-6" viewBox="0 0 24 24" fill="#f0f0f0" stroke="#333"><path d="M1.500 1.500h5v6h-5zM9.500 1.500h5v6h-5zM17.500 1.500h5v6h-5zM1.500 10.500h15v12h-15z"/><path d="M6 13l6 3.500L6 20z" fill="#333"/></svg></button>
      <button aria-label="Navigation options" class="self-end mr-[2px] mt-auto"><svg class="w-2 h-2" viewBox="0 0 8 8"><circle cx="4" cy="4" r="3.500" fill="none" stroke="#555"/><path d="M2 3.500h4M3 5.500h2" stroke="#444"/></svg></button>
    </div>

    <!-- Scale -->
    <div class="absolute right-10 bottom-[26px] flex gap-3">
      <div class="w-[114px]">
        <div class="flex justify-between pl-[2px] -mr-1 font-['Liberation_Mono',monospace] text-[11px] leading-4 text-black"><span>0</span><span>2.5</span></div>
        <div class="relative h-[30px] mt-[2px]">
          <svg class="absolute left-0 top-[6px] w-[114px] h-[14px]" viewBox="0 0 114 14" stroke="#6f72a0"><path d="M3.500 0v13M25.500 6v7M46.500 6v7M68.500 6v7M89.500 6v7"/><path d="M110.500 0v13" stroke="#111" stroke-width="1.500"/></svg>
          <input id="scale" type="range" min="0" max="2.5" step="0.5" value="0.5" aria-label="Grid scale" class="absolute left-0 bottom-0 w-full h-3 appearance-none bg-transparent [&::-webkit-slider-thumb]:appearance-none [&::-webkit-slider-thumb]:w-[7px] [&::-webkit-slider-thumb]:h-3 [&::-webkit-slider-thumb]:rounded-sm [&::-webkit-slider-thumb]:bg-[#2b2b2b] [&::-webkit-slider-thumb]:border [&::-webkit-slider-thumb]:border-white">
        </div>
        <output for="scale" class="block w-[52px] h-[18px] -ml-[2px] mt-[6px] rounded-[2px] bg-[#2d2d30] border border-black text-white text-center font-['Noto_Sans',sans-serif] text-[11px]">0.5</output>
      </div>
      <button class="w-9 h-[22px] mt-[17px] rounded-full border border-[#444a66] bg-[#c9ccdc] text-black font-['Noto_Sans',sans-serif] font-semibold text-[12px]">mm</button>
    </div>
  </main>

  <!-- Status bar -->
  <footer class="relative h-[21px] shrink-0 flex items-center bg-linear-to-b from-[#d2d2d2] to-[#e2e2e2] text-[#333]">
    <span>Ready</span>
    <span class="absolute left-[829px]">No Selection</span>
    <div class="ml-auto h-full flex items-center text-[#999]">
      <button aria-label="Check"><svg class="w-4 h-4 mr-[10px]" viewBox="0 0 16 16" fill="none" stroke="#aaa" stroke-width="1.300"><path d="M1 6l5 7L15 1"/><path d="M5 14l2-3" stroke="#c99"/></svg></button>
      <button aria-label="Curvature display"><svg class="w-4 h-4 mr-2" viewBox="0 0 16 16" fill="none" stroke="#aaa"><path d="M1 12C2 6 5 4 8 4s6 2 7 8c-4-3-10-3-14 0zM8 4v6M5 5l1 5M11 5l-1 5M1 14.500c4-3 10-3 14 0"/></svg></button>
      <button aria-label="Mirror display"><svg class="w-4 h-4 mr-[9px]" viewBox="0 0 16 16" fill="none" stroke="#999"><path d="M2.500 1.500v13M13.500 1.500v13M1 1.500h5M10 1.500h5M1 14.500h5M10 14.500h5M1.500 .5v2M14.500 .5v2M1.500 13v2M14.500 13v2"/><path d="M8 0v16" stroke-dasharray="3 1"/></svg></button>
      <button aria-label="Lock"><svg class="w-3 h-[14px] mr-[7px]" viewBox="0 0 12 14" fill="none" stroke="#888"><path d="M3 6V3c0-3 6-3 6 0v3"/><path d="M.5 6h11v7.500H.5z" fill="#ccc"/><path d="M6 8v3" stroke="#777"/></svg></button>
      <button aria-label="Show dimensions" class="w-6 h-full flex items-center justify-center bg-[#b8d9f7] border border-[#3c7cc0]"><svg class="w-4 h-4" viewBox="0 0 16 16" fill="none" stroke="#333"><path d="M.5 1v14M15.500 1v14M2 4h12M4 2L2 4l2 2M12 2l2 2-2 2"/><path d="M2.500 8.500h11v5h-11z" fill="#fff"/></svg></button>
      <button aria-label="Grid"><svg class="w-4 h-4 mx-1" viewBox="0 0 16 16" fill="#f2f2f2" stroke="#888"><path d="M5 3h11l-5 10H0zM3.500 6.500h11M1.500 10h11M9 3l-5 10M12.500 3l-5 10"/></svg></button>
      <button aria-label="Show sketch" class="w-6 h-full flex items-center justify-center bg-[#b8d9f7] border border-[#3c7cc0]"><svg class="w-[18px] h-3" viewBox="0 0 18 12" fill="none" stroke="#e0512c" stroke-width="2"><ellipse cx="9" cy="6" rx="6" ry="4"/><path d="M0 6h3M15 6h3"/></svg></button>
      <button aria-label="Windows"><svg class="w-4 h-4 mx-1" viewBox="0 0 16 16" stroke="#333"><path d="M.5 1.500h7v7h-7zM8.500 1.500h7v7h-7z" fill="#f2f2f2"/><path d="M0 12h16M2 15h12" stroke-width="1.500"/></svg></button>
      <div class="relative w-[39px] h-4 mr-px bg-[#262626]"><div class="h-full bg-linear-to-r from-[#1da53a] to-[#0c8426]" style="width:47%"></div><span class="absolute inset-0 text-center text-[12px] text-[#ddd]"><span class="text-[#143a18]">4</span>7%</span></div>
    </div>
  </footer>

  <script>
    // One tooth pointing along +x, listed from the upper root to the lower root
    const tooth = [[591, -27], [617, -20], [643, -10], [643, 10], [617, 20], [591, 27]];
    const teeth = 48;
    const outline = [];

    for (let i = 0; i < teeth; i++) {
      const a = i * 2 * Math.PI / teeth;
      tooth.forEach(([x, y]) => {
        outline.push([x * Math.cos(a) - y * Math.sin(a), x * Math.sin(a) + y * Math.cos(a)]);
      });
    }

    document.getElementById('gear').setAttribute('points', outline.map(p => p.join(',')).join(' '));
    document.getElementById('points').innerHTML = outline
      .map(([x, y]) => `<circle cx="${x}" cy="${y}" r="3.500"/><path d="M${x - 2} ${y}h3" stroke="#1e4a24" stroke-width="1"/>`)
      .join('');
  </script>
</body>
</html>
